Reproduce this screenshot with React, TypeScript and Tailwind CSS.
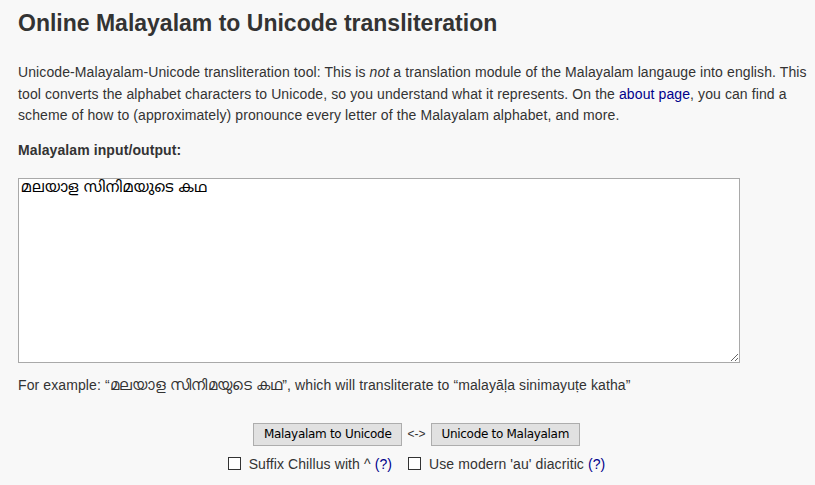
const App = () => {
  return (
    <div className="min-h-[485px] bg-[#f8f8f8] pl-[18px] pr-[0px] pt-[8px] text-[#333] tracking-[0.1px] font-['Liberation_Sans',Arial,sans-serif]">
      <h1 className="text-[23px] font-bold leading-[30px] tracking-normal text-[#333]">Online Malayalam to Unicode transliteration</h1>

      <p className="mt-[24px] pr-[4px] text-[14px] leading-[21.5px]">
        Unicode-Malayalam-Unicode transliteration tool: This is <em>not</em> a translation module of the Malayalam langauge into english. This tool
        converts the alphabet characters to Unicode, so you understand what it represents. On the{' '}
        <a className="text-[#00008b]">about page</a>, you can find a scheme of how to (approximately) pronounce every letter of the Malayalam
        alphabet, and more.
      </p>

      <div className="mt-[13px] text-[14px] font-bold leading-[20px]">Malayalam input/output:</div>

      <textarea
        className="mt-[18px] block h-[185px] w-[722px] border border-[#a9a9a9] bg-white px-[2px] py-[1px] text-[15px] leading-[18px] text-black outline-none font-['Noto_Sans_Malayalam','Noto_Sans',sans-serif]"
        defaultValue="മലയാള സിനിമയുടെ കഥ"
      />

      <p className="mt-[12px] text-[14px] leading-[20px]">
        For example: “<span className="text-[15px]">മലയാള സിനിമയുടെ കഥ</span>”, which will transliterate to “malayāḷa sinimayuṭe katha”
      </p>

      <div className="mt-[28px] flex items-center justify-center gap-[5px] tracking-normal">
        <button className="h-[23px] border border-[#adadad] bg-[#e1e1e1] px-[10px] text-[12px] text-black font-['DejaVu_Sans',Tahoma,sans-serif] tracking-[-0.3px]">
          Malayalam to Unicode
        </button>
        <span className="text-[12px] text-[#333]">&lt;-&gt;</span>
        <button className="h-[23px] border border-[#adadad] bg-[#e1e1e1] px-[10px] text-[12px] text-black font-['DejaVu_Sans',Tahoma,sans-serif] tracking-[-0.3px]">
          Unicode to Malayalam
        </button>
      </div>

      <div className="mt-[8px] flex items-center justify-center gap-[16px] text-[14px] leading-[20px]">
        <label className="flex items-center gap-[8px]">
          <span className="inline-block h-[13px] w-[13px] border border-[#333] bg-white" />
          <span>
            Suffix Chillus with ^ <a className="text-[#00008b]">(?)</a>
          </span>
        </label>
        <label className="flex items-center gap-[8px]">
          <span className="inline-block h-[13px] w-[13px] border border-[#333] bg-white" />
          <span>
            Use modern 'au' diacritic <a className="text-[#00008b]">(?)</a>
          </span>
        </label>
      </div>
    </div>
  );
};

export default App;
